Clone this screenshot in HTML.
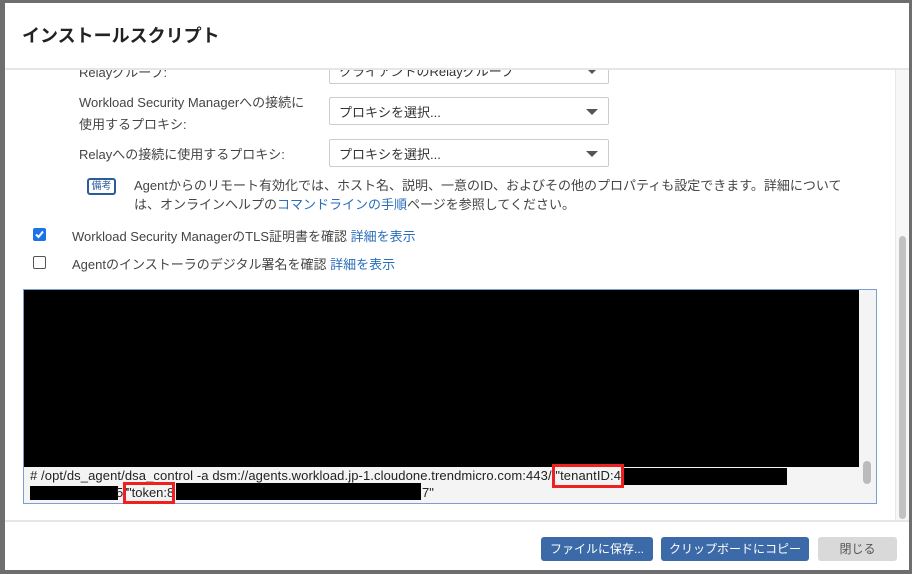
<!DOCTYPE html>
<html><head><meta charset="utf-8"><style>
*{box-sizing:border-box;margin:0;padding:0}
body{width:912px;height:574px;background:#6e6e6e;position:relative;overflow:hidden;font-family:"Liberation Sans","Noto Sans CJK JP",sans-serif;color:#333;font-size:13px}
.m{position:absolute;left:5px;top:3px;width:904px;height:567px;background:#fff}
.a{position:absolute}
.t{left:17px;top:19px;font-size:18px;font-weight:bold;color:#222}
.sel{position:absolute;left:324px;width:280px;height:28px;border:1px solid #ccc;border-radius:2px;background:#fff;padding:4px 9px;font-size:13px;color:#333}
.sel:after{content:"";position:absolute;right:10px;top:11px;border-left:6px solid transparent;border-right:6px solid transparent;border-top:6px solid #555}
.lnk{color:#2a6ebb}
.btn{position:absolute;top:534px;height:24px;border-radius:3px;font-size:12px;text-align:center;line-height:24px}
.b1{background:#3c6aa8;color:#fff}
.cb{position:absolute;left:28px;width:13px;height:13px;border:1px solid #555;border-radius:2px}
</style></head><body>
<div class="m">
<div class="a t">インストールスクリプト</div>
<div class="a" style="left:0;top:65px;width:904px;height:2px;background:#e6e6e6"></div>
<div class="a" style="left:0;top:67px;width:890px;height:450px;overflow:hidden">
 <div class="a" style="left:74px;top:-8px;color:#444">Relayグループ:</div>
 <div class="sel" style="top:-14px">クライアントのRelayグループ</div>
 <div class="a" style="left:74px;top:22px;line-height:22px;color:#444">Workload Security Managerへの接続に<br>使用するプロキシ:</div>
 <div class="sel" style="top:27px">プロキシを選択...</div>
 <div class="a" style="left:74px;top:74px;color:#444">Relayへの接続に使用するプロキシ:</div>
 <div class="sel" style="top:69px">プロキシを選択...</div>
 <div class="a" style="left:82px;top:108px;width:29px;height:17px;border:2px solid #2a5c9a;border-radius:3px;font-size:10px;text-align:center;line-height:13px;color:#2a5c9a">備考</div>
 <div class="a" style="left:129px;top:106px;line-height:19px;color:#444">Agentからのリモート有効化では、ホスト名、説明、一意のID、およびその他のプロパティも設定できます。詳細について<br>は、オンラインヘルプの<span class="lnk">コマンドラインの手順</span>ページを参照してください。</div>
 <div class="cb" style="top:158px;background:#1a73e8;border-color:#1a73e8"><svg width="11" height="11" viewBox="0 0 11 11" style="position:absolute;left:0;top:0"><path d="M2 5.5l2.5 2.5L9 2.5" stroke="#fff" stroke-width="2" fill="none"/></svg></div>
 <div class="a" style="left:67px;top:156px;color:#444">Workload Security ManagerのTLS証明書を確認 <span class="lnk">詳細を表示</span></div>
 <div class="cb" style="top:186px"></div>
 <div class="a" style="left:67px;top:184px;color:#444">Agentのインストーラのデジタル署名を確認 <span class="lnk">詳細を表示</span></div>
 <div class="a" style="left:18px;top:219px;width:854px;height:215px;border:1px solid #7a9fd0;background:#f4f4f4">
  <div class="a" style="left:0;top:0;width:835px;height:177px;background:#000"></div>
  <div class="a" style="left:839px;top:171px;width:8px;height:23px;background:#bbb;border-radius:4px"></div>
  <div class="a" style="left:6px;top:178px;font-size:13px;color:#222;white-space:nowrap;letter-spacing:0.1px"># /opt/ds_agent/dsa_control -a dsm://agents.workload.jp-1.cloudone.trendmicro.com:443/ "tenantID:4</div>
  <div class="a" style="left:599px;top:178px;width:164px;height:17px;background:#000"></div>
  <div class="a" style="left:528px;top:174px;width:72px;height:24px;border:3px solid #f02020"></div>
  <div class="a" style="left:6px;top:196px;width:88px;height:14px;background:#000"></div>
  <div class="a" style="left:92px;top:195px;font-size:13px;color:#222">5"</div>
  <div class="a" style="left:103px;top:195px;font-size:13px;color:#222">"token:8</div>
  <div class="a" style="left:99px;top:192px;width:52px;height:22px;border:3px solid #f02020"></div>
  <div class="a" style="left:152px;top:193px;width:245px;height:17px;background:#000"></div>
  <div class="a" style="left:398px;top:195px;font-size:13px;color:#222">7"</div>
 </div>
</div>
<div class="a" style="left:890px;top:67px;width:14px;height:450px;background:#f7f7f7;border-left:1px solid #e8e8e8"></div>
<div class="a" style="left:894px;top:233px;width:7px;height:283px;background:#c2c2c2;border-radius:4px"></div>
<div class="a" style="left:0;top:517px;width:904px;height:2px;background:#e6e6e6"></div>
<div class="btn b1" style="left:536px;width:112px">ファイルに保存...</div>
<div class="btn b1" style="left:656px;width:148px">クリップボードにコピー</div>
<div class="btn" style="left:813px;width:79px;background:#d9d9d9;color:#555">閉じる</div>
</div>
</body></html>
